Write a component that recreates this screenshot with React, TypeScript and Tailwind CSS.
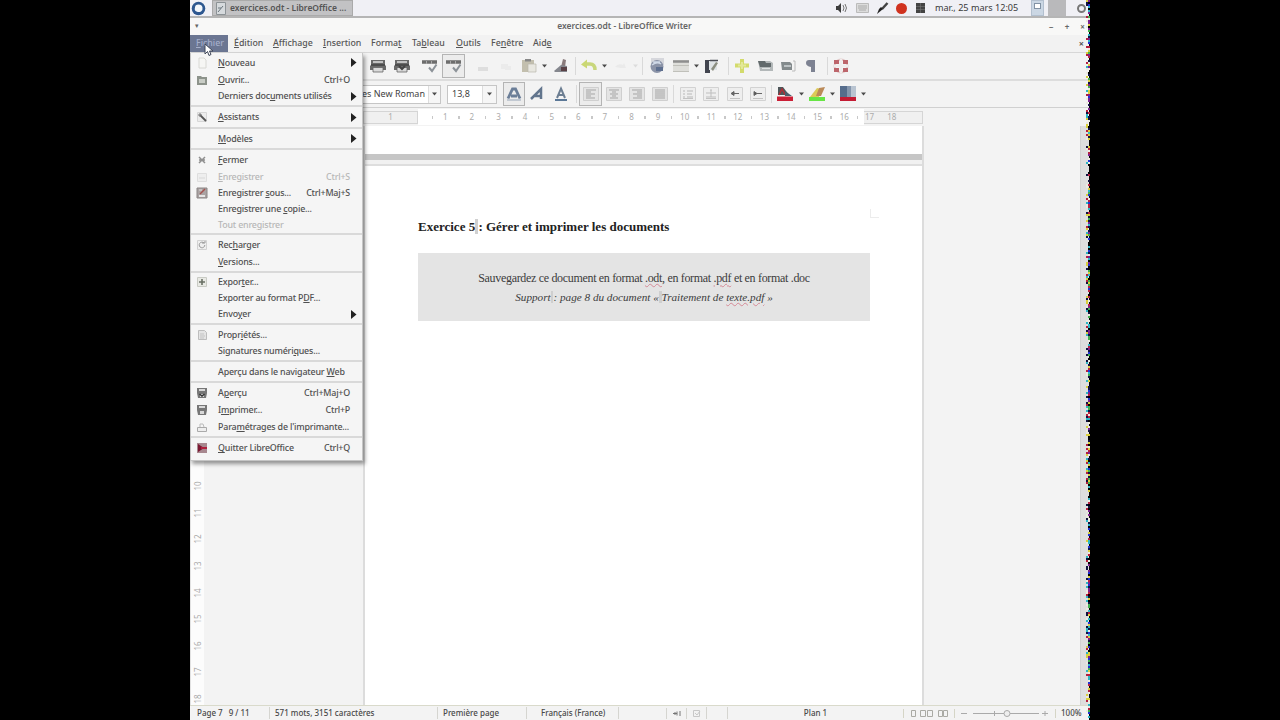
import { Fragment, type ReactNode } from 'react';
import clsx from 'clsx';

type MenuRow = {
  label: ReactNode;
  h: string;
  shortcut?: string;
  submenu?: boolean;
  disabled?: boolean;
  icon?: string;
};

const U = ({ children }: { children: ReactNode }) => (
  <span className="underline decoration-1 underline-offset-1">{children}</span>
);

const MENU_BAR = [
  { label: <><U>É</U>dition</>, w: 'w-[39px]' },
  { label: <><U>A</U>ffichage</>, w: 'w-[50px]' },
  { label: <><U>I</U>nsertion</>, w: 'w-[48px]' },
  { label: <>Forma<U>t</U></>, w: 'w-[41px]' },
  { label: <>Ta<U>b</U>leau</>, w: 'w-[44px]' },
  { label: <><U>O</U>utils</>, w: 'w-[35px]' },
  { label: <>Fe<U>n</U>être</>, w: 'w-[42px]' },
  { label: <>Aid<U>e</U></>, w: 'w-[30px]' },
];

const MENU: MenuRow[][] = [
  [
    { label: <><U>N</U>ouveau</>, h: 'h-[17px]', submenu: true, icon: 'new' },
    { label: <><U>O</U>uvrir...</>, h: 'h-[17px]', shortcut: 'Ctrl+O', icon: 'open' },
    { label: <>Derniers doc<U>u</U>ments utilisés</>, h: 'h-[16px]', submenu: true },
  ],
  [{ label: <><U>A</U>ssistants</>, h: 'h-[18px]', submenu: true, icon: 'wizard' }],
  [{ label: <><U>M</U>odèles</>, h: 'h-[17px]', submenu: true }],
  [
    { label: <><U>F</U>ermer</>, h: 'h-[17px]', icon: 'close' },
    { label: <><U>E</U>nregistrer</>, h: 'h-[17px]', shortcut: 'Ctrl+S', disabled: true, icon: 'save' },
    { label: <>Enregistrer <U>s</U>ous...</>, h: 'h-[16px]', shortcut: 'Ctrl+Maj+S', icon: 'saveas' },
    { label: <>Enregistrer une <U>c</U>opie...</>, h: 'h-[16px]' },
    { label: <>Tout enre<U>g</U>istrer</>, h: 'h-[15px]', disabled: true },
  ],
  [
    { label: <>Rec<U>h</U>arger</>, h: 'h-[17px]', icon: 'reload' },
    { label: <><U>V</U>ersions...</>, h: 'h-[17px]' },
  ],
  [
    { label: <>Expor<U>t</U>er...</>, h: 'h-[16px]', icon: 'export' },
    { label: <>Exporter au format P<U>D</U>F...</>, h: 'h-[16px]' },
    { label: <>Envo<U>y</U>er</>, h: 'h-[16px]', submenu: true },
  ],
  [
    { label: <>Propr<U>i</U>étés...</>, h: 'h-[17px]', icon: 'props' },
    { label: <>Signatures numéri<U>q</U>ues...</>, h: 'h-[16px]' },
  ],
  [{ label: <>Aperçu dans le navigateur <U>W</U>eb</>, h: 'h-[17px]' }],
  [
    { label: <>A<U>p</U>erçu</>, h: 'h-[17px]', shortcut: 'Ctrl+Maj+O', icon: 'preview' },
    { label: <>I<U>m</U>primer...</>, h: 'h-[17px]', shortcut: 'Ctrl+P', icon: 'print' },
    { label: <>Para<U>m</U>étrages de l'imprimante...</>, h: 'h-[17px]', icon: 'printset' },
  ],
  [{ label: <><U>Q</U>uitter LibreOffice</>, h: 'h-[18px]', shortcut: 'Ctrl+Q', icon: 'quit' }],
];

function MenuIcon({ name }: { name: string }) {
  return (
    <svg width="12" height="12" viewBox="0 0 12 12" fill="none">
      {name === 'new' && <path d="M3 1h5l2 2v8H3z" stroke="#d8d8d4" fill="#f6f6f4" />}
      {name === 'open' && (
        <>
          <path d="M1 2h4l1 1h5v8H1z" fill="#8d938b" />
          <path d="M3 5h6v4H3z" fill="#c9cdc6" />
        </>
      )}
      {name === 'wizard' && (
        <>
          <path d="M1.500 1.500h9v9h-9z" stroke="#d6d6d6" fill="#ececec" />
          <path d="M4 4l6 6" stroke="#555" strokeWidth="1.800" />
          <path d="M2 4h4M4 2v4" stroke="#777" />
        </>
      )}
      {name === 'close' && <path d="M3 3l6 6M9 3l-6 6M3 6h6" stroke="#909090" strokeWidth="1.500" />}
      {name === 'save' && (
        <>
          <path d="M1.500 2.500h9v8h-9z" stroke="#dedede" fill="#eee" />
          <path d="M3 7h6" stroke="#d8d8d8" />
        </>
      )}
      {name === 'saveas' && (
        <>
          <path d="M1 1h10v10H1z" fill="#aaa3a3" stroke="#8a8585" />
          <path d="M3 8h6v2H3z" fill="#e5e5e5" />
          <path d="M4 7l5-5" stroke="#a4524e" strokeWidth="1.500" />
          <path d="M3 3h3" stroke="#ddd" />
        </>
      )}
      {name === 'reload' && (
        <>
          <path d="M1.500 1.500h9v9h-9z" stroke="#d2d2d2" fill="#efefef" />
          <path d="M8 4a2.800 2.800 0 1 0 .8 2M6 4h3V2" stroke="#999" />
        </>
      )}
      {name === 'export' && (
        <>
          <path d="M1.500 1.500h9v9h-9z" stroke="#c9cbc4" fill="#e8e9e4" />
          <path d="M3 6h6M6 3v6" stroke="#697064" strokeWidth="1.600" />
        </>
      )}
      {name === 'props' && (
        <>
          <path d="M2.500 1.500h6l2 2v7h-8z" stroke="#bdbdbd" fill="#e4e4e4" />
          <path d="M4 5h4M4 7h5M4 9h4" stroke="#c3c3c3" />
        </>
      )}
      {(name === 'preview' || name === 'print') && (
        <>
          <path d="M1 1h10v5l-1 5H2L1 6z" fill="#777" />
          <path d="M3 2h6v2H3zM4 7h4v3H4z" fill="#d8d8d8" />
          {name === 'preview' && <path d="M3.500 7l2.500 2 2.500-2" stroke="#333" strokeWidth="1.500" />}
        </>
      )}
      {name === 'printset' && (
        <>
          <path d="M1.500 6.500h9v4h-9z" stroke="#aaa" fill="#eee" />
          <path d="M4 6V3h3l1 3" stroke="#bbb" />
        </>
      )}
      {name === 'quit' && (
        <>
          <path d="M1 1h10v10H1z" fill="#a8888f" />
          <path d="M2 2l6 4-6 4z" fill="#7c1732" />
          <path d="M5 6h6" stroke="#b01f3c" strokeWidth="2" />
        </>
      )}
    </svg>
  );
}

function Icon({ children }: { children: ReactNode }) {
  return (
    <svg width="18" height="18" viewBox="0 0 18 18" fill="none" className="shrink-0">
      {children}
    </svg>
  );
}

function Cell({ w, boxed, children }: { w: string; boxed?: boolean; children?: ReactNode }) {
  return (
    <div
      className={clsx(
        'flex h-[24px] shrink-0 items-center justify-center',
        w,
        boxed && 'border border-[#b4b4b4] bg-[#ececec]'
      )}
    >
      {children}
    </div>
  );
}

const Arrow = ({ w, faint }: { w: string; faint?: boolean }) => (
  <Cell w={w}>
    <svg width="5" height="4" viewBox="0 0 5 4">
      <path d="M0 .5h5L2.500 3.500z" fill={faint ? '#dcdcdc' : '#4b4b4b'} />
    </svg>
  </Cell>
);

const Sep = ({ w }: { w: string }) => (
  <Cell w={w}>
    <div className="h-[18px] w-px bg-[#d9d9d9]" />
  </Cell>
);

function Printer({ preview }: { preview?: boolean }) {
  return (
    <Icon>
      <path d="M2 3h14v5l1 1v4H1V9l1-1z" fill="#6a6a6a" />
      <path d="M4 4h10v2H4z" fill="#c2c2c2" />
      <path d="M2 8h14" stroke="#444" strokeWidth="1.500" />
      <path d="M4 10.500h10V15H4z" fill="#dadada" stroke="#666" strokeWidth=".8" />
      {preview && <path d="M6 9l3 3 3-3" stroke="#444" strokeWidth="2" />}
    </Icon>
  );
}

function SpellCheck() {
  return (
    <Icon>
      <path d="M1 5h15" stroke="#6d6d6d" strokeWidth="3.500" />
      <path d="M5.500 4v3M10.500 4v3" stroke="#a9a9a9" />
      <path d="M8 10.500l3 3.500 4.500-6.500" stroke="#8c9298" strokeWidth="2" />
    </Icon>
  );
}

function AlignIcon({ kind }: { kind: 'left' | 'center' | 'right' | 'justify' }) {
  const d = {
    left: 'M4 5h10M4 7h5M4 9h9M4 11h5M4 13h9',
    center: 'M4 5h10M7 7h4M5 9h8M7 11h4M5 13h8',
    right: 'M4 5h10M9 7h5M5 9h9M9 11h5M5 13h9',
    justify: 'M4 5h10M4 7h10M4 9h10M4 11h10M4 13h10',
  }[kind];
  return (
    <Icon>
      <path d="M1.500 2.500h15v13h-15z" fill="#e4e4e4" stroke="#cfcfcf" />
      <path d={d} stroke="#a5a5a5" />
    </Icon>
  );
}

function ListIcon({ kind }: { kind: 'bullets' | 'numbers' | 'outdent' | 'indent' }) {
  return (
    <Icon>
      <path d="M1.500 2.500h15v13h-15z" fill="#eee" stroke="#d2d2d2" />
      {kind === 'bullets' && <path d="M4 6h2M8 6h6M4 9h2M8 9h5M4 12h2M8 12h6" stroke="#b8b8b8" />}
      {kind === 'numbers' && <path d="M8 5h2M9 5v7M4 8h10M4 12h10" stroke="#bebebe" />}
      {kind === 'outdent' && <path d="M5 8.500l3-2v4zM6 8.500h7" fill="#555" stroke="#666" />}
      {kind === 'indent' && <path d="M8 8.500l-3-2v4zM8 8.500h5" fill="#555" stroke="#666" />}
      <path d="M4 13.500h10" stroke="#c2c2c2" />
    </Icon>
  );
}

function TopPanel() {
  return (
    <div className="flex h-[18px] shrink-0 items-center border-b-2 border-[#b5b5b5] bg-[#f0f0f5]">
      <div className="flex w-[22px] shrink-0 justify-start pl-px">
        <svg width="15" height="15" viewBox="0 0 15 15">
          <circle cx="7.500" cy="7.500" r="6.800" fill="#2d5790" />
          <path d="M4 6.500q0-3 3.500-3t4 3-1.500 4-4.500 0T4 6.500z" fill="#f2f6fb" />
        </svg>
      </div>
      <div className="flex h-[16px] w-[141px] shrink-0 items-center border border-[#aaa] bg-[#c2c2c4] pl-[3px] text-[8.500px] font-semibold text-[#555]">
        <svg width="10" height="13" viewBox="0 0 10 13">
          <path d="M.5.5h9v12h-9z" fill="#d6dadd" stroke="#8c9296" />
          <path d="M2 10l5-6M2 6h3" stroke="#69747c" />
        </svg>
        <span className="ml-[4px] whitespace-nowrap">exercices.odt - LibreOffice ...</span>
      </div>
      <div className="ml-[482px] flex w-[100px] shrink-0 items-center gap-[7px]">
        <svg width="14" height="12" viewBox="0 0 14 12" fill="none">
          <path d="M1 4h2l3-3v10L3 8H1z" fill="#3d3d3d" />
          <path d="M8 3q2 3 0 6M10 2q3 4 0 8" stroke="#777" />
        </svg>
        <svg width="13" height="10" viewBox="0 0 13 10">
          <path d="M.5.5h12v9H.5z" fill="#dcdcdc" stroke="#bbb" />
          <path d="M2 3h9M2 5h9M3 7h7" stroke="#aaa" />
        </svg>
        <svg width="13" height="13" viewBox="0 0 13 13">
          <path d="M11.500 1L6 7" stroke="#444" strokeWidth="2.500" />
          <path d="M7 7L1 12l2-5 2-2z" fill="#222" />
        </svg>
        <div className="size-[11px] rounded-full bg-[#d0321f]" />
        <svg width="9" height="10" viewBox="0 0 9 10" className="ml-[2px]">
          <path d="M0 0h9v10H0z" fill="#444" />
          <path d="M0 3.500h9M0 6.500h9M4.500 0v10" stroke="#777" strokeWidth=".6" />
        </svg>
      </div>
      <div className="w-[96px] shrink-0 text-[9.100px] whitespace-nowrap text-[#3a3a3a]">mar., 25 mars 12:05</div>
      <div className="h-[16px] w-[13px] shrink-0 border border-[#b3c0cf] bg-[#cbd7e4] px-[2px] pt-[2px]">
        <div className="h-[6px] border border-[#8292a4] bg-white" />
      </div>
      <div className="ml-[4px] h-[16px] w-[18px] shrink-0 bg-[#b9b9bb]" />
      <div className="ml-[11px] size-[9px] shrink-0 rounded-full border-2 border-[#777]" />
    </div>
  );
}

function TitleBar() {
  return (
    <div className="flex h-[17px] shrink-0 items-center bg-[#f8f8f7] text-[#666]">
      <div className="w-[14px] text-center text-[7px]">▾</div>
      <div className="w-[845px] pr-[4px] text-center text-[8.450px] font-semibold text-[#666]">
        exercices.odt - LibreOffice Writer
      </div>
      <div className="flex gap-[11px] text-[8px] font-bold">
        <span>−</span>
        <span>+</span>
        <span>×</span>
      </div>
    </div>
  );
}

function MenuBar() {
  return (
    <div className="flex h-[18px] shrink-0 items-center border-b border-[#d7d7d7] bg-[#f2f2f2] text-[8.800px] font-medium whitespace-nowrap text-[#555]">
      <div className="mr-[6px] h-[17px] w-[38px] bg-[#6b7692] pl-[6px] leading-[16px] text-[#a5afca]">
        <U>F</U>ichier
      </div>
      {MENU_BAR.map((m, i) => (
        <div key={i} className={clsx('shrink-0', m.w)}>
          {m.label}
        </div>
      ))}
      <div className="grow pr-[5px] text-right text-[9px] font-bold">×</div>
    </div>
  );
}

function StandardToolbar() {
  return (
    <div className="flex h-[28px] shrink-0 items-center border-b-2 border-[#dddddd] bg-[#f3f3f3] pl-[176px]">
      <Cell w="w-[24px]"><Printer /></Cell>
      <Cell w="w-[23px]"><Printer preview /></Cell>
      <Cell w="ml-[5px] w-[23px]"><SpellCheck /></Cell>
      <Cell w="ml-px w-[23px]" boxed><SpellCheck /></Cell>
      <Cell w="ml-[6px] w-[23px]">
        <Icon><path d="M4 10h10v4H4z" fill="#dedede" /></Icon>
      </Cell>
      <Cell w="w-[23px]">
        <Icon><path d="M4 7h7v5H4zM8 9h6v4H8z" fill="#ebebeb" /></Icon>
      </Cell>
      <Cell w="w-[23px]">
        <Icon>
          <path d="M2 3h12v12H2z" fill="#c3bfae" />
          <path d="M5 2h6v2.500H5z" fill="#888" />
          <path d="M8 7h8v8H8z" fill="#e8e7e0" stroke="#b9b7ae" strokeWidth=".7" />
        </Icon>
      </Cell>
      <Arrow w="w-[9px]" />
      <Cell w="w-[24px]">
        <Icon>
          <path d="M11 2l3 1-1 7H9z" fill="#8a7b7c" />
          <path d="M2 14l7-6 6 1v6H3z" fill="#85878e" />
          <path d="M9 10h6v4H9z" fill="#5a4146" />
        </Icon>
      </Cell>
      <Sep w="w-[4px]" />
      <Cell w="w-[24px]">
        <Icon>
          <path d="M5 7h5q5 0 5 6" stroke="#c9d77c" strokeWidth="3.500" />
          <path d="M1 7.500l6-5v9z" fill="#cbd873" />
        </Icon>
      </Cell>
      <Arrow w="w-[7px]" />
      <Cell w="w-[24px]">
        <Icon><path d="M4 10q3-4 8-2l1-2 2 5-5 0z" fill="#eaeaea" /></Icon>
      </Cell>
      <Arrow w="w-[7px]" faint />
      <Sep w="w-[7px]" />
      <Cell w="w-[22px]">
        <Icon>
          <path d="M3 1h13v7H3z" fill="#d6d7dc" />
          <circle cx="9" cy="9.500" r="6.500" fill="#8b93a7" />
          <path d="M4 8q5-4 9-1M5 5h7" stroke="#d0d9e7" strokeWidth="1.500" />
          <path d="M8 10h7v4H8z" fill="#5e6f8f" />
        </Icon>
      </Cell>
      <Cell w="w-[25px]">
        <Icon>
          <path d="M1 3h16v12H1z" fill="#dededa" />
          <path d="M1 4.500h16" stroke="#8e8e8e" strokeWidth="2.500" />
          <path d="M1 8.500h16M1 14.500h16" stroke="#c0c0ba" />
        </Icon>
      </Cell>
      <Arrow w="w-[7px]" />
      <Cell w="w-[24px]">
        <Icon>
          <path d="M2 3h5v13H2z" fill="#42454f" />
          <path d="M6 4h8v9H6z" fill="#dfe4e6" />
          <path d="M8 12l5-7 2 1-5 8z" fill="#8b8e80" />
          <path d="M7 3.500h8" stroke="#4b4d54" strokeWidth="1.500" />
        </Icon>
      </Cell>
      <Sep w="ml-[2px] w-[4px]" />
      <Cell w="w-[23px]">
        <Icon>
          <path d="M7 2h4v4.500h5v4h-5V16H7v-5.500H2v-4h5z" fill="#d3db6c" />
          <path d="M9 5v7M5 8.500h8" stroke="#e3e899" strokeWidth="2" />
        </Icon>
      </Cell>
      <Cell w="w-[23px]">
        <Icon>
          <path d="M2 4h12l3 2v8H4z" fill="#b3b8b9" />
          <path d="M2 4h7l1 2h5v4H4z" fill="#626a6c" />
          <path d="M6 11.500h8" stroke="#e1e5e5" />
        </Icon>
      </Cell>
      <Cell w="w-[23px]">
        <Icon>
          <path d="M2 5h9l2 2v6H3z" fill="#838a8c" />
          <path d="M5 9h7" stroke="#bcc2c4" strokeWidth="2" />
          <path d="M14 4h2v10h-3" stroke="#bbb" />
        </Icon>
      </Cell>
      <Cell w="w-[23px]">
        <Icon>
          <path d="M6 3h7v12H9v-5Q4 9 4 6t3-3z" fill="#7d8292" />
        </Icon>
      </Cell>
      <Sep w="ml-[3px] w-[4px]" />
      <Cell w="w-[23px]">
        <Icon>
          <circle cx="9" cy="9" r="6.500" stroke="#e2cbcb" strokeWidth="2" />
          <path d="M2 3h5v4H2zM11 3h5v4h-5zM2 11h5v4H2zM11 11h5v4h-5z" fill="#bd656b" />
          <path d="M9 2v14M2 9h14" stroke="#f1eded" strokeWidth="2" />
        </Icon>
      </Cell>
    </div>
  );
}

function FormatToolbar() {
  return (
    <div className="flex h-[27px] shrink-0 items-center border-b border-[#d0d0d0] bg-[#f3f3f3] pl-[150px] text-[9px] text-[#3f3f3f]">
      <div className="flex h-[19px] w-[101px] shrink-0 items-center justify-end border border-[#c6c6c6] bg-white">
        <span className="whitespace-nowrap">Times New Roman</span>
        <div className="ml-[3px] flex h-full w-[12px] items-center justify-center border-l border-[#ddd] bg-[#f6f6f6]">
          <Arrow w="w-[9px]" />
        </div>
      </div>
      <div className="ml-[6px] flex h-[19px] w-[50px] shrink-0 items-center border border-[#c6c6c6] bg-white pl-[4px]">
        <span>13,8</span>
        <div className="ml-auto flex h-full w-[14px] items-center justify-center border-l border-[#ddd] bg-[#f6f6f6]">
          <Arrow w="w-[9px]" />
        </div>
      </div>
      <Cell w="ml-[6px] w-[22px]" boxed>
        <Icon>
          <path d="M3 13.500L7.500 4h3l4.500 9.500M6 11h6" stroke="#6b7e98" strokeWidth="2.800" />
          <path d="M2 15h14" stroke="#97a5b8" />
        </Icon>
      </Cell>
      <Cell w="w-[24px]">
        <Icon>
          <path d="M3 14L13 4v10M7 11h6" stroke="#62758d" strokeWidth="2.500" />
        </Icon>
      </Cell>
      <Cell w="w-[23px]">
        <Icon>
          <path d="M5 13L9 3.500l4 9.500M6 10h6" stroke="#6c7e92" strokeWidth="2" />
          <path d="M3 15h12" stroke="#5b7897" strokeWidth="2" />
        </Icon>
      </Cell>
      <Sep w="ml-[2px] w-[5px]" />
      <Cell w="w-[23px]" boxed><AlignIcon kind="left" /></Cell>
      <Cell w="w-[23px]"><AlignIcon kind="center" /></Cell>
      <Cell w="w-[23px]"><AlignIcon kind="right" /></Cell>
      <Cell w="w-[23px]"><AlignIcon kind="justify" /></Cell>
      <Sep w="w-[5px]" />
      <Cell w="w-[23px]"><ListIcon kind="bullets" /></Cell>
      <Cell w="w-[24px]"><ListIcon kind="numbers" /></Cell>
      <Cell w="w-[23px]"><ListIcon kind="outdent" /></Cell>
      <Cell w="w-[23px]"><ListIcon kind="indent" /></Cell>
      <Sep w="w-[4px]" />
      <Cell w="w-[24px]">
        <Icon>
          <path d="M2 2h5l6 8H2z" fill="#4e5659" />
          <path d="M3 10L6 4l4 7" stroke="#b22d36" strokeWidth="1.500" />
          <path d="M9 6l7 5H9z" fill="#49606d" />
          <path d="M1 11.500h16V16H1z" fill="#cb1f36" />
        </Icon>
      </Cell>
      <Arrow w="w-[8px]" />
      <Cell w="w-[24px]">
        <Icon>
          <path d="M2 12L9 3l4 1-2 8z" fill="#dccb58" />
          <path d="M8 11l3-8 6-1-4 9z" fill="#bb8a58" />
          <path d="M1 12h16v4H1z" fill="#67e545" />
        </Icon>
      </Cell>
      <Arrow w="w-[7px]" />
      <Cell w="w-[24px]">
        <Icon>
          <path d="M1 1h16v11H1z" fill="#566d8c" />
          <path d="M8 1h5v11H8z" fill="#8496ad" />
          <path d="M12 1h5v11h-5z" fill="#b9c4d1" />
          <path d="M1 12h16v4H1z" fill="#c41b34" />
        </Icon>
      </Cell>
      <Arrow w="w-[7px]" />
    </div>
  );
}

const H_NUMBERS = Array.from({ length: 16 }, (_, i) => i + 1);
const V_NUMBERS = [10, 11, 12, 13, 14, 15, 16, 17, 18];

function HorizontalRuler() {
  return (
    <div className="flex h-[18px] shrink-0 items-center bg-[#f3f3f3] pl-[173px] text-[8px] text-[#acacac]">
      <div className="flex h-[13px] w-[55px] shrink-0 items-center justify-center border border-[#d5d5d5] bg-[#f0f0f0]">1</div>
      <div className="flex h-[16px] w-[446px] shrink-0 items-center bg-white pl-[14px]">
        {H_NUMBERS.map((n) => (
          <div key={n} className="flex w-[26.600px] shrink-0 items-center justify-between">
            <i className="h-[3px] w-[0.500px] bg-[#c8c8c8]" />
            <span>{n}</span>
            <i className="h-[3px] w-[0.500px] bg-[#c8c8c8]" />
          </div>
        ))}
      </div>
      <div className="flex h-[13px] w-[59px] shrink-0 items-center border border-l-0 border-[#d5d5d5] bg-[#f0f0f0]">
        <span className="pl-px">17</span>
        <span className="ml-[13px]">18</span>
      </div>
    </div>
  );
}

function VerticalRuler() {
  return (
    <div className="flex w-[14px] shrink-0 flex-col border-l border-[#e2e2e2] bg-[#fcfcfc] pt-[347px] pl-px text-[8px] text-[#a9a9a9]">
      {V_NUMBERS.map((n) => (
        <div key={n} className="flex h-[26.600px] shrink-0 items-center justify-center">
          <span className="-rotate-90">{n}</span>
        </div>
      ))}
    </div>
  );
}

const Misspelt = ({ children }: { children: ReactNode }) => (
  <span className="underline decoration-[#d58a96] decoration-wavy decoration-[0.5px] underline-offset-1">{children}</span>
);

function Page() {
  return (
    <div className="flex w-[561px] shrink-0 flex-col border-x-2 border-[#dcdcdc]">
      <div className="h-[28px] bg-white" />
      <div className="h-[6px] bg-[#c6c6c6]" />
      <div className="h-[6px] border-b-2 border-[#dedede] bg-[#f1f1f1]" />
      <div className="grow bg-white pl-[53px] font-['Liberation_Serif',serif] text-[#222]">
        <div className="flex h-[51px] w-[461px] justify-end pt-[43px]">
          <div className="size-[9px] border-b border-l border-[#ececec]" />
        </div>
        <div className="h-[36px] pt-px text-[13px] leading-[18px] font-bold whitespace-nowrap">
          Exercice 5<span className="bg-[#d0d0d0]">&nbsp;</span>: Gérer et imprimer les documents
        </div>
        <div className="h-[68px] w-[452px] bg-[#e4e4e4] pt-[16px] text-center whitespace-nowrap text-[#3c3c3c]">
          <p className="text-[12px] leading-[19px] tracking-[-0.320px]">
            Sauvegardez ce document en format <Misspelt>.odt</Misspelt>, en format <Misspelt>.pdf</Misspelt> et en format .doc
          </p>
          <p className="text-[11.200px] leading-[18px] italic">
            Support<span className="bg-[#cfcfcf]">&nbsp;</span>: page 8 du document «<span className="bg-[#cfcfcf]">&nbsp;</span>Traitement de <Misspelt>texte.pdf</Misspelt> »
          </p>
        </div>
      </div>
    </div>
  );
}

function StatusBar() {
  return (
    <div className="flex h-[15px] shrink-0 items-center border-t border-[#d9dacb] bg-[#f3f3f3] text-[8px] font-medium whitespace-nowrap text-[#484848]">
      <div className="flex w-[79px] gap-[6px] pl-[7px]">
        <span>Page 7</span>
        <span>9 / 11</span>
      </div>
      <div className="w-[168px] border-l border-[#d5d5d0] pl-[5px]">571 mots, 3151 caractères</div>
      <div className="w-[89px] border-l border-[#d5d5d0] pl-[5px]">Première page</div>
      <div className="w-[92px] border-l border-[#d5d5d0] pl-[14px]">Français (France)</div>
      <div className="w-[48px] border-l border-[#d5d5d0]">&nbsp;</div>
      <div className="flex w-[20px] justify-center border-l border-[#d5d5d0] py-[2px]">
        <svg width="8" height="7" viewBox="0 0 8 7" fill="none" stroke="#777">
          <path d="M0 3.500h4M4 1.500v4M7 1v5M2 2v3" />
        </svg>
      </div>
      <div className="flex w-[20px] justify-center border-l border-[#d5d5d0] py-px">
        <svg width="9" height="9" viewBox="0 0 9 9" fill="none" stroke="#c8c8c8">
          <path d="M1.500 1.500h6v6h-6zM3 4l2 2 3-4" />
        </svg>
      </div>
      <div className="w-[22px] border-x border-[#d5d5d0]">&nbsp;</div>
      <div className="w-[175px] text-center">Plan 1</div>
      <div className="flex w-[52px] items-center justify-center border-x border-[#d5d5c6]">
        <svg width="40" height="9" viewBox="0 0 40 9" fill="none" stroke="#aaaaa4">
          <path d="M2.500 1.500h4v6h-4zM11.500 1.500h5v6h-5zM18.500 1.500h5v6h-5zM29.500 1.500h4v6h-4zM34.500 1.500h4v6h-4z" />
        </svg>
      </div>
      <div className="flex w-[101px] items-center justify-center border-r border-[#d5d5c6]">
        <svg width="92" height="9" viewBox="0 0 92 9" fill="none" stroke="#aaa">
          <path d="M2 4.500h6M14 4.500h66M35.500 2v5M83 4.500h6M86 2v5" />
          <circle cx="48" cy="4.500" r="3" fill="#eee" />
        </svg>
      </div>
      <span className="pl-[5px]">100%</span>
    </div>
  );
}

function FileMenu() {
  return (
    <div className="absolute top-[53px] left-[190px] w-[173px] border border-t-0 border-[#c5c5c5] bg-[#f5f5f5] pt-px pb-[3px] text-[8.900px] font-medium text-[#505050] shadow-[2px_3px_4px_rgba(0,0,0,0.4)]">
      {MENU.map((group, i) => (
        <Fragment key={i}>
          {i > 0 && (
            <div className="flex h-[4px] items-center">
              <div className="h-[2px] w-full bg-[#d9d9d9]" />
            </div>
          )}
          {group.map((row, j) => (
            <div
              key={j}
              className={clsx('flex items-center pr-[12px] pl-[5px] whitespace-nowrap', row.h, row.disabled && 'text-[#b7b7b7]')}
            >
              <div className="w-[22px] shrink-0">{row.icon && <MenuIcon name={row.icon} />}</div>
              <span className="grow tracking-[-0.180px]">{row.label}</span>
              {row.shortcut && <span className="shrink-0 tracking-[-0.200px]">{row.shortcut}</span>}
              {row.submenu && (
                <svg width="6" height="9" viewBox="0 0 6 9" className="-mr-[7px] shrink-0">
                  <path d="M0 0l5.500 4.500L0 9z" fill="#222" />
                </svg>
              )}
            </div>
          ))}
        </Fragment>
      ))}
    </div>
  );
}

const NOISE = ['#101040', '#1f2fd0', '#d9cf3a', '#000000', '#b51e3e', '#3fae4c', '#ece9df', '#7a1f8c', '#2bb5c4'];

// Column of corrupted pixels at the right edge of the recording
function EdgeNoise() {
  const paths = NOISE.map(() => '');
  let seed = 7;
  for (let y = 0; y < 720; y += 2) {
    for (let x = 0; x < 4; x += 2) {
      seed = (seed * 1103515245 + 12345) % 2147483648;
      const k = Math.floor(seed / 4096) % (NOISE.length + 2);
      if (k < NOISE.length && (x > 0 || k % 2 === 0)) paths[k] += `M${x} ${y}h2v2h-2z`;
    }
  }
  return (
    <svg width="4" height="720" viewBox="0 0 4 720" className="absolute top-0 left-[1086px]">
      {paths.map((d, i) => (
        <path key={i} d={d} fill={NOISE[i]} />
      ))}
    </svg>
  );
}

export default function App() {
  return (
    <div className="relative h-[720px] w-[1280px] overflow-hidden bg-black font-['Noto_Sans',sans-serif]">
      <div className="mx-[190px] flex h-full w-[899px] flex-col overflow-hidden bg-[#f3f3f3]">
        <TopPanel />
        <TitleBar />
        <MenuBar />
        <StandardToolbar />
        <FormatToolbar />
        <HorizontalRuler />
        <div className="flex min-h-0 grow overflow-hidden">
          <VerticalRuler />
          <div className="flex grow pl-[159px]">
            <Page />
          </div>
          <div className="w-[9px] border-l border-[#d2d2d2] bg-[#dedede]" />
        </div>
        <StatusBar />
      </div>
      <FileMenu />
      <svg width="10" height="14" viewBox="0 0 10 14" className="absolute top-[43px] left-[204px]">
        <path d="M1 1v10l2.500-2.500L5 12.500l2-1-1.500-3.500H9z" fill="#fff" stroke="#3e4658" />
      </svg>
      <EdgeNoise />
    </div>
  );
}
